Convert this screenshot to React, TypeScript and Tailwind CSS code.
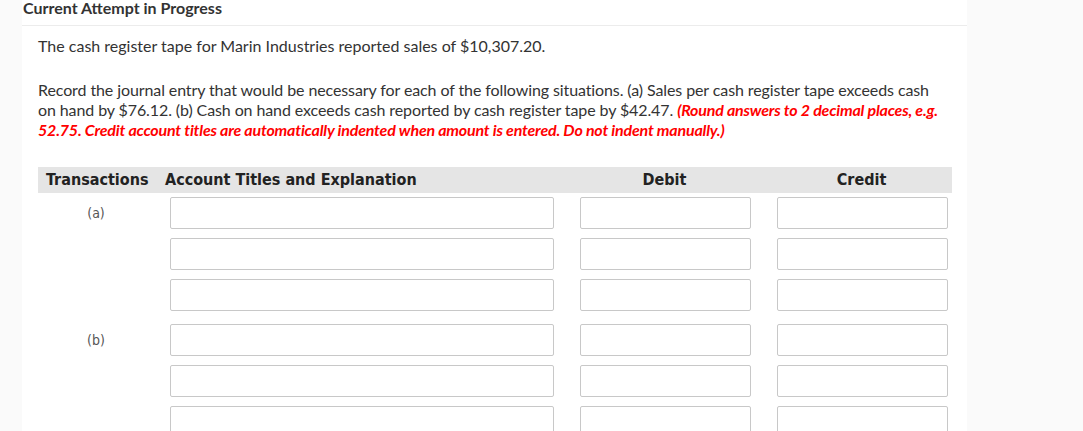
import React from 'react';

const lato = { fontFamily: 'Lato, "Liberation Sans", sans-serif' };
const tableFont = { fontFamily: 'Tahoma, "DejaVu Sans Condensed", "Open Sans", sans-serif' };

const Field = ({ w }: { w: string }) => (
  <input
    type="text"
    className={`${w} h-[32px] border border-[#c8c8c8] rounded-[2px] bg-white outline-none`}
  />
);

const EntryRow = ({ label }: { label?: string }) => (
  <div className="flex items-center h-[32px]">
    <div className="w-[116px] text-center text-[14px] text-[#555]" style={tableFont}>
      {label}
    </div>
    <div className="w-[16px]" />
    <Field w="w-[384px]" />
    <div className="w-[26px]" />
    <Field w="w-[171px]" />
    <div className="w-[26px]" />
    <Field w="w-[171px]" />
  </div>
);

const EntryGroup = ({ label, first }: { label: string; first?: boolean }) => (
  <div className={`flex flex-col gap-[9px] ${first ? 'mt-[4px]' : 'mt-[13px]'}`}>
    <EntryRow label={label} />
    <EntryRow />
    <EntryRow />
  </div>
);

export default function App() {
  return (
    <div className="min-h-screen bg-[#fafafa] flex" style={lato}>
      <div className="ml-[22px] w-[945px] bg-white min-h-screen">
        <div className="h-[26px] border-b border-[#ececec]">
          <div className="pl-[1px] text-[16px] leading-[16px] font-bold text-[#333]">Current Attempt in Progress</div>
        </div>
        <div className="pl-[16px] pr-[15px] pt-[10px] text-[16px] leading-[20px] text-[#333]">
          <p>The cash register tape for Marin Industries reported sales of $10,307.20.</p>
          <p className="mt-[24px] w-[905px] tracking-[-0.1px]">
            Record the journal entry that would be necessary for each of the following situations. (a) Sales per cash register tape exceeds cash on hand by $76.12. (b) Cash on hand exceeds cash reported by cash register tape by $42.47.{' '}
            <span className="font-bold italic text-[#ff0000] tracking-[-0.2px]">
              (Round answers to 2 decimal places, e.g. 52.75. Credit account titles are automatically indented when amount is entered. Do not indent manually.)
            </span>
          </p>

          <div className="mt-[27px] w-[914px]">
            <div className="flex items-center h-[26px] bg-[#e5e5e5] text-[16px] font-bold text-[#222]" style={tableFont}>
              <div className="w-[127px] pl-[8px]">Transactions</div>
              <div className="w-[388px]">Account Titles and Explanation</div>
              <div className="w-[26px]" />
              <div className="w-[171px] text-center">Debit</div>
              <div className="w-[26px]" />
              <div className="w-[171px] text-center">Credit</div>
            </div>
            <EntryGroup label="(a)" first />
            <EntryGroup label="(b)" />
          </div>
        </div>
      </div>
    </div>
  );
}
